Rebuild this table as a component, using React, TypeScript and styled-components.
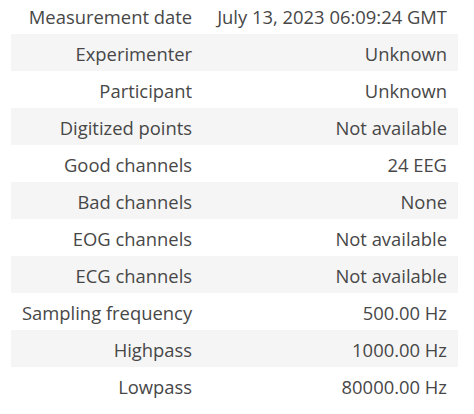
import React from "react";
import styled, { createGlobalStyle } from "styled-components";

const Global = createGlobalStyle`
  html, body { margin: 0; padding: 0; background: #ffffff; }
  body { font-family: "Open Sans", "Noto Sans", sans-serif; }
`;

const Table = styled.div`
  display: grid;
  grid-template-columns: auto 1fr;
  width: 447px;
  margin: -3px 0 0 11px;
  color: #474747;
  font-size: 18.4px;
`;

const Row = styled.div<{ $striped: boolean }>`
  display: contents;
  & > div {
    background: ${(p) => (p.$striped ? "#f5f5f5" : "transparent")};
  }
`;

const Label = styled.div`
  height: 37px;
  display: flex;
  align-items: center;
  justify-content: flex-end;
  padding: 2px 10px 0 11px;
  box-sizing: border-box;
  white-space: nowrap;
`;

const Value = styled.div`
  height: 37px;
  display: flex;
  align-items: center;
  justify-content: flex-end;
  padding: 2px 11px 0 11px;
  box-sizing: border-box;
  white-space: nowrap;
`;

const rows: [string, string][] = [
  ["Measurement date", "July 13, 2023 06:09:24 GMT"],
  ["Experimenter", "Unknown"],
  ["Participant", "Unknown"],
  ["Digitized points", "Not available"],
  ["Good channels", "24 EEG"],
  ["Bad channels", "None"],
  ["EOG channels", "Not available"],
  ["ECG channels", "Not available"],
  ["Sampling frequency", "500.00 Hz"],
  ["Highpass", "1000.00 Hz"],
  ["Lowpass", "80000.00 Hz"],
];

export default function App() {
  return (
    <>
      <Global />
      <Table>
        {rows.map(([k, v], i) => (
          <Row key={k} $striped={i % 2 === 1}>
            <Label>{k}</Label>
            <Value>{v}</Value>
          </Row>
        ))}
      </Table>
    </>
  );
}
